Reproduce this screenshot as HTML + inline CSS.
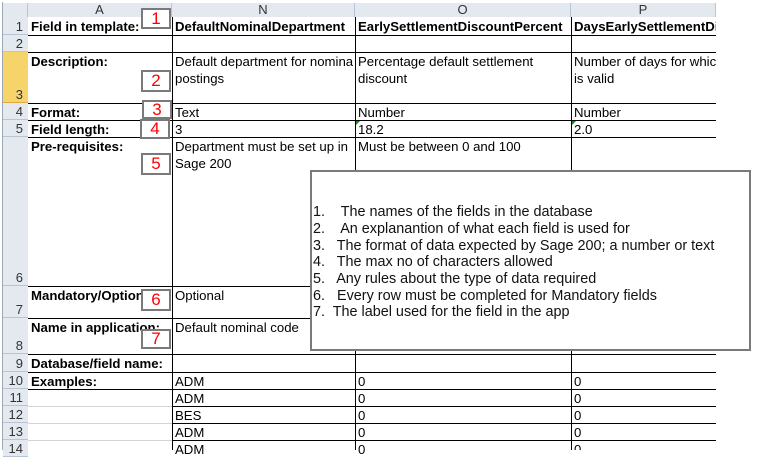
<!DOCTYPE html>
<html><head><meta charset="utf-8"><style>
*{margin:0;padding:0;box-sizing:border-box}
body{width:762px;height:450px;background:#fff;position:relative;overflow:hidden;font-family:"Liberation Sans",Arial,sans-serif;font-size:13.2px;color:#000}
.a{position:absolute}
.rh{position:absolute;left:3px;width:25px;background:#e4e9f0;border-bottom:1px solid #b8c4d4;text-align:right;padding-right:5px;color:#333;font-size:13px;display:flex;align-items:flex-end;justify-content:flex-end}
.ch{position:absolute;top:2px;height:15px;background:#e4e9f0;border-right:1px solid #b8c4d4;text-align:center;color:#333;font-size:13px;line-height:15px}
.h{position:absolute;height:1px;background:#000}
.v{position:absolute;width:1px;background:#000}
.t{position:absolute;white-space:nowrap;line-height:17px;overflow:hidden}
.n{width:178px}.o{width:211px}
.b{font-weight:bold}
.nb{position:absolute;width:30px;background:#fff;border:2px solid #7a7a7a;color:#f00;font-size:17px;text-align:center}
.tb{position:absolute;left:310px;top:170px;width:441px;height:181px;border:2px solid #7a7a7a;background:#fff}
.tb div{position:absolute;left:1px;white-space:nowrap;font-size:14.4px;color:#111}
</style></head><body>
<div class="ch" style="left:3px;width:25px"></div>
<div class="ch" style="left:28px;width:144px">A</div>
<div class="ch" style="left:172px;width:183px">N</div>
<div class="ch" style="left:355px;width:216px">O</div>
<div class="ch" style="left:571px;width:145px">P</div>
<div class="a" style="left:0;top:0;width:716px;height:3px;background:#fff"></div>
<div class="rh" style="top:17px;height:18px">1</div>
<div class="rh" style="top:35px;height:17px">2</div>
<div class="rh" style="top:52px;height:51px;background:#f7d46a;border-bottom:1px solid #e2a93e">3</div>
<div class="rh" style="top:103px;height:17px">4</div>
<div class="rh" style="top:120px;height:17px">5</div>
<div class="rh" style="top:137px;height:149px">6</div>
<div class="rh" style="top:286px;height:32px">7</div>
<div class="rh" style="top:318px;height:36px">8</div>
<div class="rh" style="top:354px;height:18px">9</div>
<div class="rh" style="top:372px;height:17px">10</div>
<div class="rh" style="top:389px;height:17px">11</div>
<div class="rh" style="top:406px;height:17px">12</div>
<div class="rh" style="top:423px;height:17px">13</div>
<div class="rh" style="top:440px;height:17px">14</div>
<div class="a" style="left:2px;top:2px;width:1px;height:448px;background:#9aa8b8"></div>
<div class="a" style="left:28px;top:406px;width:144px;height:1px;background:#d4d4d4"></div>
<div class="a" style="left:28px;top:423px;width:144px;height:1px;background:#d4d4d4"></div>
<div class="a" style="left:28px;top:440px;width:144px;height:1px;background:#d4d4d4"></div>
<div class="h" style="left:28px;top:35px;width:688px"></div>
<div class="h" style="left:28px;top:52px;width:688px"></div>
<div class="h" style="left:28px;top:103px;width:688px"></div>
<div class="h" style="left:28px;top:120px;width:688px"></div>
<div class="h" style="left:28px;top:137px;width:688px"></div>
<div class="h" style="left:28px;top:286px;width:688px"></div>
<div class="h" style="left:28px;top:318px;width:688px"></div>
<div class="h" style="left:28px;top:354px;width:688px"></div>
<div class="h" style="left:28px;top:372px;width:688px"></div>
<div class="h" style="left:172px;top:389px;width:544px"></div>
<div class="h" style="left:172px;top:406px;width:544px"></div>
<div class="h" style="left:172px;top:423px;width:544px"></div>
<div class="h" style="left:172px;top:440px;width:544px"></div>
<div class="h" style="left:28px;top:389px;width:144px"></div>
<div class="v" style="left:172px;top:17px;height:433px"></div>
<div class="v" style="left:355px;top:17px;height:433px"></div>
<div class="v" style="left:571px;top:17px;height:433px"></div>
<div class="a" style="left:356px;top:121px;width:0;height:0;border-top:4px solid #1a8a1a;border-right:4px solid transparent"></div>
<div class="a" style="left:572px;top:121px;width:0;height:0;border-top:4px solid #1a8a1a;border-right:4px solid transparent"></div>
<div class="t b" style="left:31px;top:18px">Field in template:</div>
<div class="t b" style="left:31px;top:53px">Description:</div>
<div class="t b" style="left:31px;top:104px">Format:</div>
<div class="t b" style="left:31px;top:121px">Field length:</div>
<div class="t b" style="left:31px;top:138px">Pre-requisites:</div>
<div class="t b" style="left:31px;top:287px">Mandatory/Optional</div>
<div class="t b" style="left:31px;top:319px">Name in application:</div>
<div class="t b" style="left:31px;top:355px">Database/field name:</div>
<div class="t b" style="left:31px;top:373px">Examples:</div>
<div class="t b n" style="left:175px;top:18px">DefaultNominalDepartment</div>
<div class="t n" style="left:175px;top:53px">Default department for nominal<br>postings</div>
<div class="t" style="left:175px;top:104px">Text</div>
<div class="t" style="left:175px;top:121px">3</div>
<div class="t n" style="left:175px;top:138px">Department must be set up in<br>Sage 200</div>
<div class="t" style="left:175px;top:287px">Optional</div>
<div class="t" style="left:175px;top:319px">Default nominal code</div>
<div class="t" style="left:175px;top:373px">ADM</div>
<div class="t" style="left:175px;top:390px">ADM</div>
<div class="t" style="left:175px;top:407px">BES</div>
<div class="t" style="left:175px;top:424px">ADM</div>
<div class="t" style="left:175px;top:441px">ADM</div>
<div class="t b o" style="left:358px;top:18px">EarlySettlementDiscountPercent</div>
<div class="t o" style="left:358px;top:53px">Percentage default settlement<br>discount</div>
<div class="t" style="left:358px;top:104px">Number</div>
<div class="t" style="left:358px;top:121px">18.2</div>
<div class="t" style="left:358px;top:138px">Must be between 0 and 100</div>
<div class="t" style="left:358px;top:373px">0</div>
<div class="t" style="left:358px;top:390px">0</div>
<div class="t" style="left:358px;top:407px">0</div>
<div class="t" style="left:358px;top:424px">0</div>
<div class="t" style="left:358px;top:441px">0</div>
<div class="a" style="left:572px;top:17px;width:144px;height:433px;overflow:hidden">
<div class="t b" style="left:2px;top:1px">DaysEarlySettlementDiscount</div>
<div class="t" style="left:2px;top:36px">Number of days for which<br>is valid</div>
<div class="t" style="left:2px;top:87px">Number</div>
<div class="t" style="left:2px;top:104px">2.0</div>
<div class="t" style="left:2px;top:356px">0</div>
<div class="t" style="left:2px;top:373px">0</div>
<div class="t" style="left:2px;top:390px">0</div>
<div class="t" style="left:2px;top:407px">0</div>
<div class="t" style="left:2px;top:424px">0</div>
</div>
<div class="a" style="left:716px;top:0;width:46px;height:450px;background:#fff"></div>
<div class="nb" style="left:141px;top:8px;height:21px;line-height:17px">1</div>
<div class="nb" style="left:141px;top:70px;height:22px;line-height:18px">2</div>
<div class="nb" style="left:142px;top:100px;height:19px;line-height:15px">3</div>
<div class="nb" style="left:140px;top:119px;height:20px;line-height:16px">4</div>
<div class="nb" style="left:141px;top:153px;height:22px;line-height:18px">5</div>
<div class="nb" style="left:141px;top:289px;height:22px;line-height:18px">6</div>
<div class="nb" style="left:141px;top:329px;height:20px;line-height:16px">7</div>
<div class="tb">
<div style="top:32px">1.&nbsp;&nbsp;&nbsp; The names of the fields in the database</div>
<div style="top:49px">2.&nbsp;&nbsp;&nbsp; An explanantion of what each field is used for</div>
<div style="top:66px">3.&nbsp;&nbsp; The format of data expected by Sage 200; a number or text</div>
<div style="top:82px">4.&nbsp;&nbsp; The max no of characters allowed</div>
<div style="top:99px">5.&nbsp;&nbsp; Any rules about the type of data required</div>
<div style="top:116px">6.&nbsp;&nbsp; Every row must be completed for Mandatory fields</div>
<div style="top:132px">7.&nbsp; The label used for the field in the app</div>
</div>
</body></html>
